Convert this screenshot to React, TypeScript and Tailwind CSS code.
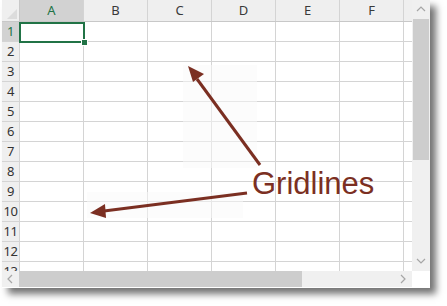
import React from 'react'

const COLS = ['A', 'B', 'C', 'D', 'E', 'F', 'G']
const ROWS = Array.from({ length: 13 }, (_, i) => i + 1)

const font = { fontFamily: '"Noto Sans", "Open Sans", Arial, sans-serif' }

function Chevron({ dir }: { dir: 'up' | 'down' | 'left' | 'right' }) {
  const d = {
    up: 'M2 7 L6 3 L10 7',
    down: 'M2 3 L6 7 L10 3',
    left: 'M7 2 L3 6 L7 10',
    right: 'M3 2 L7 6 L3 10',
  }[dir]
  return (
    <svg width="12" height="12" viewBox="0 0 12 12" fill="none" stroke="#a6a6a6" strokeWidth="1.2">
      <path d={d} />
    </svg>
  )
}

export default function App() {
  return (
    <div className="w-[447px] h-[306px] bg-white overflow-hidden" style={font}>
      <div className="relative ml-[2px] w-[428px] h-[288px] bg-white flex flex-col shadow-[6px_6px_7px_rgba(0,0,0,0.55)]">
        <div className="flex h-[271px]">
          {/* Sheet grid */}
          <div className="w-[410px] overflow-hidden">
            {/* Column headers */}
            <div className="flex h-[22px] bg-[#efefef] border-b border-[#c8c8c8]">
              <div className="w-[18px] shrink-0 relative border-r border-[#c8c8c8]">
                <div className="absolute right-[2px] bottom-[2px] w-0 h-0 border-l-[10px] border-l-transparent border-b-[10px] border-b-[#dcdcdc]" />
              </div>
              {COLS.map((c) => (
                <div
                  key={c}
                  className={`w-[64px] shrink-0 flex items-center justify-center text-[13px] border-r border-[#d4d4d4] ${
                    c === 'A' ? 'bg-[#d2d2d2] text-[#217346]' : 'text-[#3a3a3a]'
                  }`}
                >
                  {c}
                </div>
              ))}
            </div>
            {/* Rows */}
            {ROWS.map((r) => (
              <div key={r} className="flex h-[20px]">
                <div
                  className={`w-[18px] shrink-0 flex items-center justify-center text-[13px] tracking-[-0.5px] border-r border-b border-[#d4d4d4] ${
                    r === 1 ? 'bg-[#d2d2d2] text-[#217346]' : 'bg-[#efefef] text-[#333]'
                  }`}
                >
                  {r}
                </div>
                {COLS.map((c) => (
                  <div key={c} className="w-[64px] shrink-0 border-r border-b border-[#d4d4d4]" />
                ))}
              </div>
            ))}
          </div>
          {/* Vertical scrollbar */}
          <div className="w-[18px] bg-[#f0f0f0] flex flex-col items-center">
            <div className="h-[19px] flex items-center justify-center">
              <Chevron dir="up" />
            </div>
            <div className="w-[16px] h-[141px] bg-[#cdcdcd]" />
            <div className="flex-1" />
            <div className="h-[18px] flex items-center justify-center">
              <Chevron dir="down" />
            </div>
          </div>
        </div>
        {/* Horizontal scrollbar */}
        <div className="flex h-[16px]">
          <div className="w-[410px] flex bg-[#f0f0f0]">
            <div className="w-[17px] flex items-center justify-center">
              <Chevron dir="left" />
            </div>
            <div className="w-[283px] bg-[#cdcdcd]" />
            <div className="flex-1" />
            <div className="w-[16px] flex items-center justify-center">
              <Chevron dir="right" />
            </div>
          </div>
          <div className="flex-1 bg-white" />
        </div>

        {/* Selected cell A1 */}
        <div className="absolute left-[17px] top-[22px] w-[66px] h-[21px] border-2 border-[#217346]" />
        <div className="absolute left-[80px] top-[40px] w-[5px] h-[5px] bg-[#217346] outline outline-1 outline-white" />

        {/* Annotation backdrops */}
        <div className="absolute left-[181px] top-[65px] w-[74px] h-[103px] bg-[#fafafa] opacity-50" />
        <div className="absolute left-[85px] top-[192px] w-[156px] h-[26px] bg-[#fafafa] opacity-50" />

        {/* Arrows */}
        <svg className="absolute left-0 top-0" width="428" height="288" viewBox="-2 0 428 288">
          <line x1="256" y1="165" x2="193" y2="79" stroke="#7b2f22" strokeWidth="3" />
          <polygon points="184,66 200,74 189,82" fill="#7b2f22" />
          <line x1="243" y1="193" x2="100" y2="211" stroke="#7b2f22" strokeWidth="3" />
          <polygon points="86,213 101,204 102,218" fill="#7b2f22" />
        </svg>
        <div
          className="absolute left-[250px] top-[168px] text-[31px] leading-none text-[#7b2f22]"
          style={{ fontFamily: '"Liberation Sans", Arial, sans-serif' }}
        >
          Gridlines
        </div>
      </div>
    </div>
  )
}
